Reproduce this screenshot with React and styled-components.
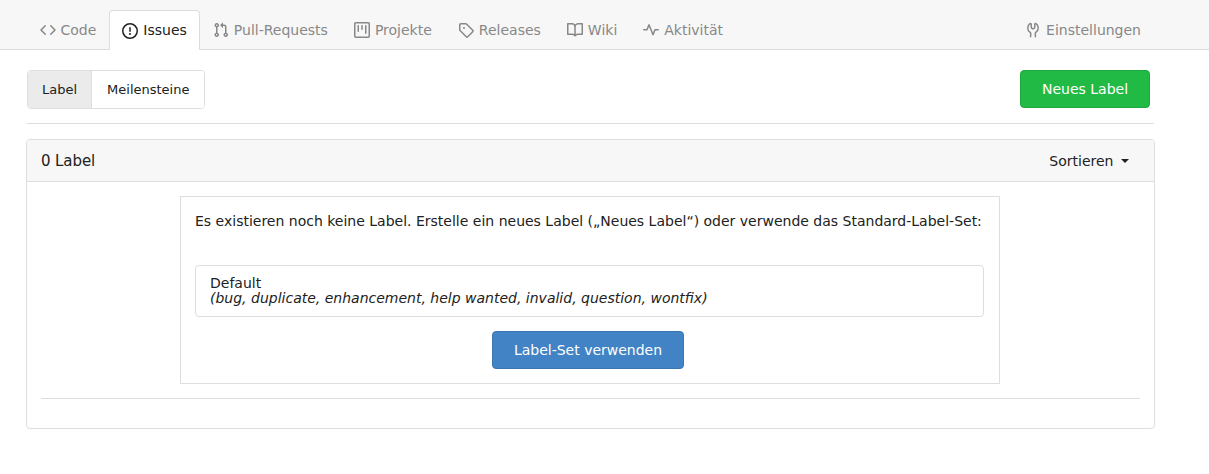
import React from 'react';
import styled, { createGlobalStyle } from 'styled-components';

const Global = createGlobalStyle`
    html, body {
        margin: 0;
        padding: 0;
        background: #fff;
        font-family: 'DejaVu Sans', sans-serif;
        font-size: 14px;
        color: #212121;
    }
    * { box-sizing: border-box; }
`;

const NavBar = styled.div`
    height: 50px;
    background: #f7f7f7;
    border-bottom: 1px solid #dcdcdc;
    padding: 10px 55px 0 26.5px;
    display: flex;
    align-items: stretch;
`;
const Tab = styled.a`
    display: flex;
    align-items: center;
    gap: 5px;
    height: 40px;
    padding: 0 12px;
    color: ${p => (p.$active ? '#212121' : '#888')};
    background: ${p => (p.$active ? '#fff' : 'transparent')};
    border: 1px solid ${p => (p.$active ? '#dcdcdc' : 'transparent')};
    border-bottom: none;
    border-radius: 4px 4px 0 0;
    margin-left: ${p => (p.$push ? 'auto' : '0')};
    svg {
        flex: none;
        margin: ${p => (p.$active ? '1px 0 0' : '0 0 1px')};
    }
`;
const TabText = styled.span`
    margin-bottom: 2px;
`;
const Page = styled.div`
    width: 1127px;
    margin-left: 27px;
`;
const TopRow = styled.div`
    display: flex;
    justify-content: space-between;
    padding: 20px 4px 0 0;
    height: 74px;
    border-bottom: 1px solid #dedede;
`;
const Segments = styled.div`
    display: flex;
    height: 39px;
    border: 1px solid #dedede;
    border-radius: 4px;
    overflow: hidden;
`;
const Segment = styled.div`
    display: flex;
    align-items: center;
    padding: 0 ${p => (p.$active ? '14px' : '15px')};
    font-size: 13px;
    background: ${p => (p.$active ? '#ebebeb' : '#fff')};
    border-right: ${p => (p.$active ? '1px solid #dedede' : 'none')};
`;
const Button = styled.button`
    display: block;
    height: 38px;
    padding: 0;
    width: ${p => p.$width}px;
    border: 1px solid ${p => p.$border};
    border-radius: 4px;
    background: ${p => p.$bg};
    color: #fff;
    font-family: inherit;
    font-size: 14px;
`;
const Card = styled.div`
    margin: 15px -1px 0;
    height: 290px;
    border: 1px solid #dedede;
    border-radius: 4px;
    overflow: hidden;
`;
const CardHeader = styled.div`
    height: 42px;
    background: #f7f7f7;
    border-bottom: 1px solid #dedede;
    display: flex;
    align-items: center;
    justify-content: space-between;
    padding: 0 25px 0 14px;
`;
const Count = styled.div`
    font-size: 15px;
    letter-spacing: -0.1px;
`;
const Sort = styled.div`
    display: flex;
    align-items: center;
    gap: 7.5px;
`;
const Caret = styled.span`
    width: 0;
    height: 0;
    border-left: 4px solid transparent;
    border-right: 4px solid transparent;
    border-top: 4px solid #212121;
`;
const CardBody = styled.div`
    padding: 14px 14px 0;
`;
const Notice = styled.div`
    width: 820px;
    height: 188px;
    margin: 0 auto 0 139px;
    border: 1px solid #dedede;
    padding: 14px 15px 14px 14px;
    display: flex;
    flex-direction: column;
`;
const NoticeText = styled.div`
    line-height: 20px;
    height: 54px;
    white-space: nowrap;
`;
const LabelSet = styled.div`
    height: 52px;
    border: 1px solid #dedede;
    border-radius: 4px;
    padding: 10px 14px;
    line-height: 15px;
`;
const LabelList = styled.div`
    font-style: italic;
`;
const Centered = styled.div`
    display: flex;
    justify-content: center;
    margin-top: 14px;
    padding-right: 3px;
`;
const Rule = styled.div`
    margin-top: 14px;
    border-top: 1px solid #dedede;
`;

// the 16px octicons, the packaged ones are the 24px cut and come out too thin
const octicons = {
    code: 'M4.72 3.22a.75.75 0 011.06 1.06L2.06 8l3.72 3.72a.75.75 0 11-1.06 1.06L.47 8.53a.75.75 0 010-1.06l4.25-4.25zm6.56 0a.75.75 0 10-1.06 1.06L13.94 8l-3.72 3.72a.75.75 0 101.06 1.06l4.25-4.25a.75.75 0 000-1.06l-4.25-4.25z',
    issue: 'M8 1.5a6.5 6.5 0 100 13 6.5 6.5 0 000-13zM0 8a8 8 0 1116 0A8 8 0 010 8zm9 3a1 1 0 11-2 0 1 1 0 012 0zm-.25-6.25a.75.75 0 00-1.5 0v3.5a.75.75 0 001.5 0v-3.5z',
    pull: 'M7.177 3.073L9.573.677A.25.25 0 0110 .854v4.792a.25.25 0 01-.427.177L7.177 3.427a.25.25 0 010-.354zM3.75 2.5a.75.75 0 100 1.5.75.75 0 000-1.5zm-2.25.75a2.25 2.25 0 113 2.122v5.256a2.251 2.251 0 11-1.5 0V5.372A2.25 2.25 0 011.5 3.25zM11 2.5h-1V4h1a1 1 0 011 1v5.628a2.251 2.251 0 101.5 0V5A2.5 2.5 0 0011 2.5zm1 10.25a.75.75 0 111.5 0 .75.75 0 01-1.5 0zM3.75 12a.75.75 0 100 1.5.75.75 0 000-1.5z',
    project: 'M1.75 0h12.5C15.216 0 16 .784 16 1.75v12.5A1.75 1.75 0 0 1 14.25 16H1.75A1.75 1.75 0 0 1 0 14.25V1.75C0 .784.784 0 1.75 0ZM1.5 1.75v12.5c0 .138.112.25.25.25h12.5a.25.25 0 0 0 .25-.25V1.75a.25.25 0 0 0-.25-.25H1.75a.25.25 0 0 0-.25.25ZM11.75 3a.75.75 0 0 1 .75.75v7.5a.75.75 0 0 1-1.5 0v-7.5a.75.75 0 0 1 .75-.75Zm-8.25.75a.75.75 0 0 1 1.5 0v5.5a.75.75 0 0 1-1.5 0ZM8 3a.75.75 0 0 1 .75.75v3.5a.75.75 0 0 1-1.5 0v-3.5A.75.75 0 0 1 8 3Z',
    tag: 'M2.5 7.775V2.75a.25.25 0 01.25-.25h5.025a.25.25 0 01.177.073l6.25 6.25a.25.25 0 010 .354l-5.025 5.025a.25.25 0 01-.354 0l-6.25-6.25a.25.25 0 01-.073-.177zm-1.5 0V2.75C1 1.784 1.784 1 2.75 1h5.025c.464 0 .91.184 1.238.513l6.25 6.25a1.75 1.75 0 010 2.474l-5.026 5.026a1.75 1.75 0 01-2.474 0l-6.25-6.25A1.75 1.75 0 011 7.775zM6 5a1 1 0 100 2 1 1 0 000-2z',
    book: 'M0 1.75A.75.75 0 01.75 1h4.253c1.227 0 2.317.59 3 1.501A3.744 3.744 0 0111.006 1h4.245a.75.75 0 01.75.75v10.5a.75.75 0 01-.75.75h-4.507a2.25 2.25 0 00-1.591.659l-.622.621a.75.75 0 01-1.06 0l-.622-.621A2.25 2.25 0 005.258 13H.75a.75.75 0 01-.75-.75V1.75zm8.755 3a2.25 2.25 0 012.25-2.25H14.5v9h-3.757c-.71 0-1.4.201-1.992.572l.004-7.322zm-1.504 7.324l.004-5.073-.002-2.253A2.25 2.25 0 005.003 2.5H1.5v9h3.757a3.75 3.75 0 011.994.574z',
    pulse: 'M6 2a.75.75 0 01.696.471L10 10.731l1.304-3.26A.75.75 0 0112 7h3.25a.75.75 0 010 1.5h-2.742l-1.812 4.528a.75.75 0 01-1.392 0L6 4.77 4.696 8.03A.75.75 0 014 8.5H.75a.75.75 0 010-1.5h2.742l1.812-4.529A.75.75 0 016 2z',
    tools: 'M5.433 2.304A4.494 4.494 0 003.5 6c0 1.598.832 3.002 2.09 3.802.518.328.929.923.902 1.64v.008l-.164 3.337a.75.75 0 11-1.498-.073l.163-3.33c.002-.085-.05-.216-.207-.316A5.996 5.996 0 012 6a5.994 5.994 0 012.567-4.92 1.482 1.482 0 011.673-.04c.462.296.76.827.76 1.423v2.82c0 .082.041.16.11.206l.75.51a.25.25 0 00.28 0l.75-.51A.25.25 0 009 5.282V2.463c0-.596.298-1.127.76-1.423a1.482 1.482 0 011.673.04A5.994 5.994 0 0114 6a5.996 5.996 0 01-2.786 5.068c-.157.1-.209.23-.207.315l.163 3.33a.75.75 0 11-1.498.074l-.164-3.337v-.008c-.027-.717.384-1.312.902-1.64A4.496 4.496 0 0012.5 6a4.494 4.494 0 00-1.933-3.696c-.024.017-.067.067-.067.16v2.818a1.75 1.75 0 01-.767 1.448l-.75.51a1.75 1.75 0 01-1.966 0l-.75-.51A1.75 1.75 0 015.5 5.282V2.463c0-.092-.043-.142-.067-.159z',
};

const Octicon = ({ name }) => (
    <svg width="16" height="16" viewBox="0 0 16 16" fill="currentColor">
        <path fillRule="evenodd" d={octicons[name]} />
    </svg>
);

const tabs = [
    { name: 'Code', icon: 'code' },
    { name: 'Issues', icon: 'issue', active: true },
    { name: 'Pull-Requests', icon: 'pull' },
    { name: 'Projekte', icon: 'project' },
    { name: 'Releases', icon: 'tag' },
    { name: 'Wiki', icon: 'book' },
    { name: 'Aktivität', icon: 'pulse' },
    { name: 'Einstellungen', icon: 'tools', push: true },
];

const App = () => {
    return (
        <>
            <Global />
            <NavBar>
                {tabs.map(({ name, icon, active, push }) => (
                    <Tab key={name} $active={active} $push={push}>
                        <Octicon name={icon} />
                        <TabText>{name}</TabText>
                    </Tab>
                ))}
            </NavBar>
            <Page>
                <TopRow>
                    <Segments>
                        <Segment $active>Label</Segment>
                        <Segment>Meilensteine</Segment>
                    </Segments>
                    <Button $width={130} $bg="#21ba45" $border="#1ea83e">Neues Label</Button>
                </TopRow>
                <Card>
                    <CardHeader>
                        <Count>0 Label</Count>
                        <Sort>Sortieren <Caret /></Sort>
                    </CardHeader>
                    <CardBody>
                        <Notice>
                            <NoticeText>Es existieren noch keine Label. Erstelle ein neues Label („Neues Label“) oder verwende das Standard-Label-Set:</NoticeText>
                            <LabelSet>
                                Default
                                <LabelList>(bug, duplicate, enhancement, help wanted, invalid, question, wontfix)</LabelList>
                            </LabelSet>
                            <Centered>
                                <Button $width={192} $bg="#4183c4" $border="#3a76b0">Label-Set verwenden</Button>
                            </Centered>
                        </Notice>
                        <Rule />
                    </CardBody>
                </Card>
            </Page>
        </>
    );
};

export default App;
